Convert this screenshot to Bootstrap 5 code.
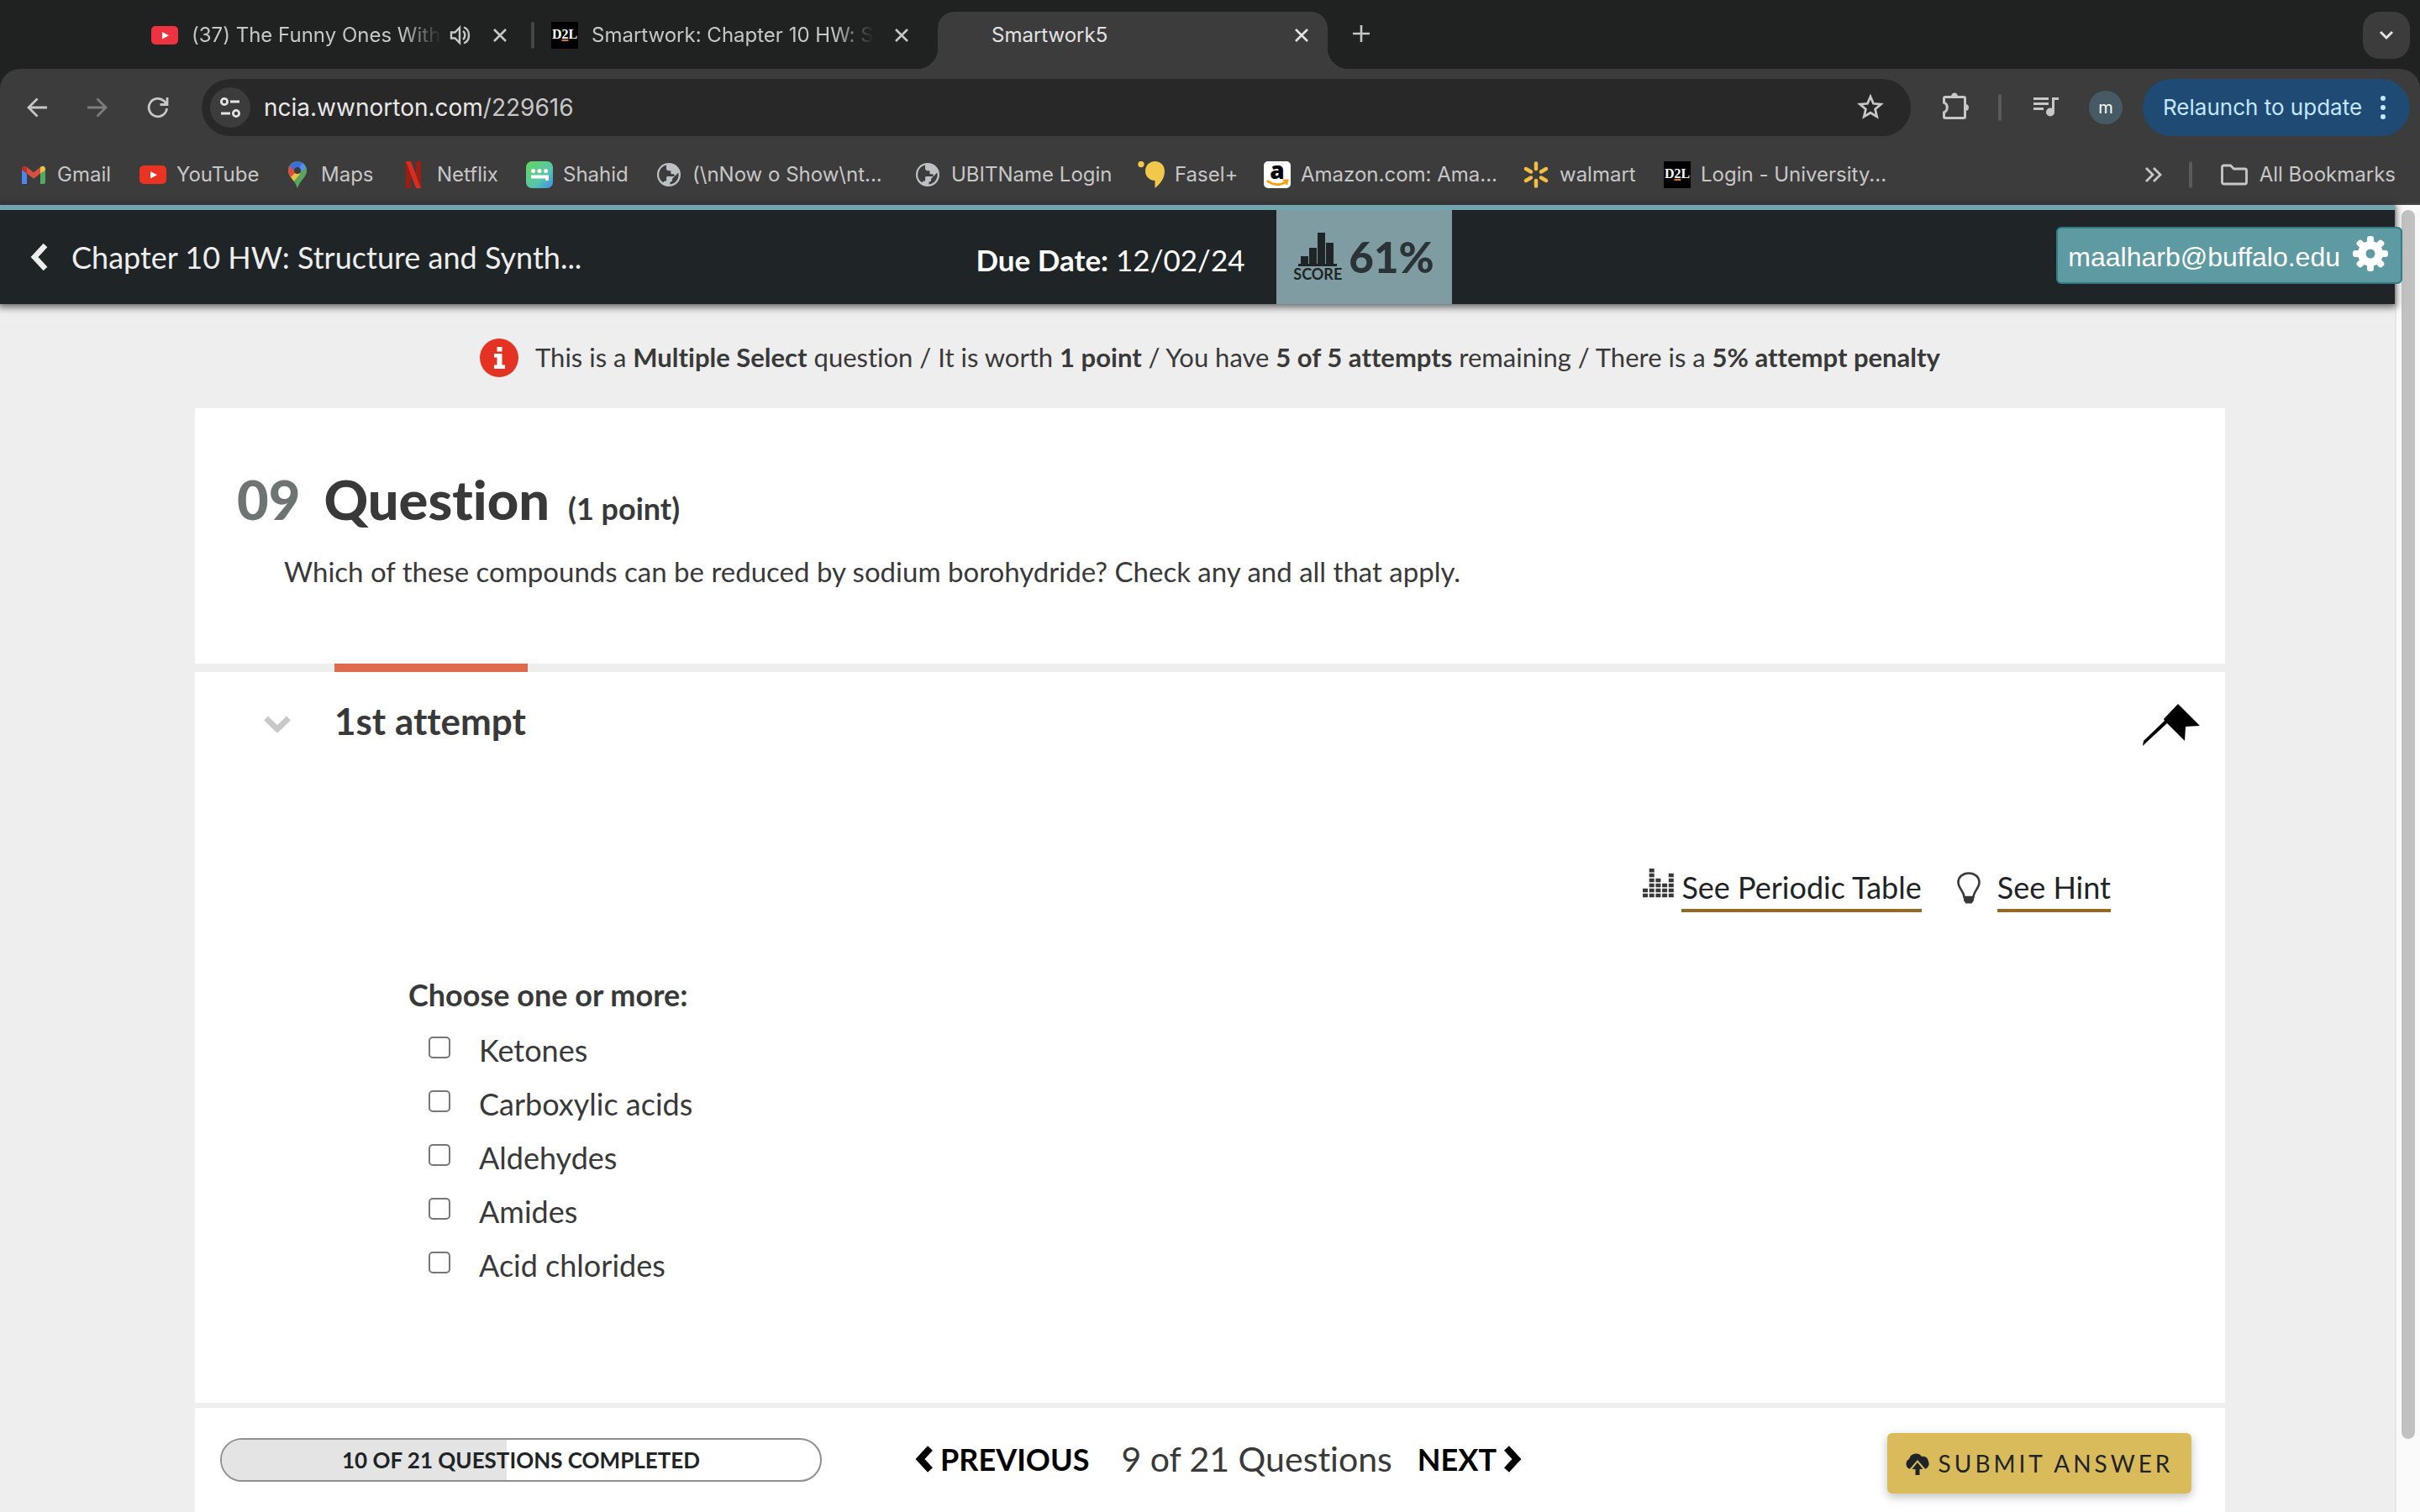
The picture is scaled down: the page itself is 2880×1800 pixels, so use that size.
<!DOCTYPE html>
<html lang="en">
<head>
<meta charset="utf-8">
<meta name="viewport" content="width=device-width, initial-scale=1">
<title>Smartwork5</title>
<link href="https://cdn.jsdelivr.net/npm/bootstrap@5.3.0/dist/css/bootstrap.min.css" rel="stylesheet">
<style>
  body { font-family: Lato, "Liberation Sans", sans-serif; font-variant-ligatures: none; color: #393939; background: #eee; overflow: hidden; }
  svg { display: block; flex: none; }
  button { font: inherit; color: inherit; background: none; border: 0; padding: 0; }
  a { color: inherit; text-decoration: none; }

  /* browser frame */
  .browser { font-family: Inter, Roboto, sans-serif; font-size: 24px; line-height: 32px; color: #c7c7c7; background: #202221; }
  .tabstrip { height: 82px; padding: 14px 12px 0 180px; }
  .tab-item { height: 56px; }
  .tab-title { overflow: hidden; white-space: nowrap; -webkit-mask-image: linear-gradient(to left, transparent, #000 48px); mask-image: linear-gradient(to left, transparent, #000 48px); }
  .tab-one { width: 456px; }
  .tab-two { width: 426px; margin-left: 20px; }
  .tab-active { position: relative; width: 464px; height: 68px; padding: 0 22px 12px 64px; margin-left: 34px; background: #3c3c3c; border-radius: 20px 20px 0 0; color: #e3e3e3; }
  .tab-active::before, .tab-active::after { content: ""; position: absolute; bottom: 0; width: 24px; height: 24px; }
  .tab-active::before { right: 100%; background: radial-gradient(circle at 0 0, transparent 24px, #3c3c3c 24px); }
  .tab-active::after { left: 100%; background: radial-gradient(circle at 100% 0, transparent 24px, #3c3c3c 24px); }
  .vline { width: 4px; height: 32px; border-radius: 2px; background: #5a5a5a; flex: none; }
  .tab-line { margin-left: 28px; background: #454545; }
  .tab-list { width: 56px; height: 56px; border-radius: 20px; background: #3c3c3c; color: #e3e3e3; }
  .d2l { width: 32px; height: 32px; background: #000; color: #fff; font: 700 16px/30px "Liberation Serif", serif; text-align: center; flex: none; display: flex; justify-content: center; }
  .d2l u { text-decoration-color: #e87511; text-decoration-thickness: 2px; }

  .toolbar { background: #3c3c3c; border-radius: 24px 24px 0 0; padding: 12px 12px 0 28px; }
  .nav-gap { margin-left: 40px; }
  .nav-off { color: #7c7c7c; }
  .omnibox { height: 68px; border-radius: 34px; background: #282828; margin-left: 36px; padding: 0 29px 0 10px; }
  .site-info { width: 48px; height: 48px; border-radius: 50%; background: #3c3c3c; color: #e3e3e3; flex: none; }
  .address { font-size: 28px; color: #c7c7c7; margin-left: 16px; }
  .address span { color: #e8e8e8; }
  .tool-line { margin: 0 36px 0 32px; }
  .avatar { width: 40px; height: 40px; border-radius: 50%; background: #455a64; color: #fff; font-size: 20px; margin: 0 24px 0 34px; }
  .relaunch { height: 68px; width: 318px; padding: 0 24px; border-radius: 34px; background: #1f4a74; color: #c2e7ff; font-size: 26px; white-space: nowrap; }

  .bookmarks { background: #3c3c3c; border-bottom: 2px solid #474747; height: 82px; padding: 12px 29px 0 24px; }
  .bookmark-list { display: grid; grid-template-columns: 142px 172px 138px 150px 154px 308px 266px 150px 308px 168px auto; }
  .bookmark-list a, .all-marks { display: flex; align-items: center; gap: 12px; white-space: nowrap; }
  .mark-line { margin: 0 32px 0 30px; }

  /* page */
  .viewport-area { flex: 1 1 0; min-height: 0; }
  .scroll-track { width: 30px; background: #fafafa; border-left: 2px solid #e6e6e6; padding: 6px 6px 0; }
  .scroll-thumb { height: 1463px; width: 16px; border-radius: 8px; background: #c1c1c1; }
  .sw-header { height: 118px; border-top: 6px solid #72a5b0; background: #1f2426; color: #fff; font-size: 36px; line-height: 44px; box-shadow: 0 2px 8px 2px rgba(0,0,0,.55); position: relative; z-index: 2; }
  .side { flex: 1 1 0; }
  .back-link { padding-left: 35px; gap: 28px; color: #eee; }
  .due-date { font-size: 35px; padding-top: 5px; }
  .score-box { width: 209px; background: #7e9ca1; color: #2a3336; margin-left: 37px; }
  .score-word { font-size: 18px; line-height: 18px; color: #1f2426; font-weight: 700; }
  .score-value { font-size: 51px; font-weight: 900; }
  .user-btn { height: 68px; margin: 20px -9px 0 0; padding: 0 14px 0 12px; gap: 14px; background: #5d9aa2; border: 2px solid #347a82; border-radius: 6px; color: #fff; font: 32px/40px "Liberation Sans", Arial, sans-serif; }
  .user-btn span { padding-top: 4px; }
  .content { padding: 0 202px 0 232px; }
  .info-row { height: 124px; padding-top: 3px; font-size: 31px; gap: 20px; }
  .panel { background: #fff; }
  .question-panel { height: 304px; padding: 64px 50px 0; margin-bottom: 10px; }
  .q-number { font-size: 65px; line-height: 88px; color: #6e7373; font-weight: 900; }
  .q-title { font-size: 65px; line-height: 88px; font-weight: 900; margin: 0 0 0 28px; }
  .q-points { font-size: 36px; font-weight: 700; margin-left: 22px; }
  .q-text { font-size: 33px; line-height: 44px; padding-left: 56px; margin: 20px 0 0; }
  .attempt-panel { margin-bottom: 6px; padding-bottom: 40px; }
  .attempt-head { padding: 0 30px 0 82px; }
  .attempt-head .fold-btn { padding-top: 52px; }
  .attempt-head .pin-btn { padding-top: 38px; }
  .attempt-title { position: relative; margin: 0 0 0 52px; padding: 32px 0 0; font-size: 44px; line-height: 52px; font-weight: 700; width: 230px; white-space: nowrap; }
  .attempt-title::before { content: ""; position: absolute; left: 0; right: 0; top: -10px; height: 10px; background: #dd6b4d; }
  .tools { padding: 146px 136px 0 0; font-size: 36px; line-height: 44px; color: #1f2426; }
  .tools a { border-bottom: 4px solid #916b26; padding-bottom: 4px; }
  .bulb { margin: 4px 20px 0 42px; }
  .choices { border: 0; padding: 0 0 0 254px; margin: 76px 0 0; font-size: 36px; }
  .choices legend { font-size: 36px; line-height: 44px; font-weight: 700; margin: 0 0 13px; float: none; }
  .choice { height: 64px; padding-left: 24px; gap: 34px; }
  .choice label { line-height: 44px; padding-bottom: 2px; }
  .choice input { appearance: none; width: 26px; height: 26px; border: 2px solid #767676; border-radius: 5px; background: #fff; margin: 0 0 8px; }
  .sw-footer { height: 124px; padding: 0 40px 0 30px; }
  .done-bar { width: 716px; height: 52px; border: 2px solid #8f8f8f; border-radius: 26px; background: #fff; position: relative; }
  .done-bar .progress-bar { background: #e4e4e4; }
  .done-text { position: absolute; inset: 0; font-size: 26px; line-height: 48px; font-weight: 700; color: #1f2426; text-align: center; }
  .pager { font-size: 36px; line-height: 48px; color: #000; font-weight: 700; margin-left: 111px; padding-bottom: 3px; }
  .pager .count { font-size: 41px; font-weight: 400; color: #393939; margin: 0 30px 0 38px; }
  .pager button { display: flex; align-items: center; gap: 8px; }
  .submit-btn { width: 362px; height: 72px; margin-top: 8px; border-radius: 6px; background: #d9bb5c; color: #1f2426; font-size: 28px; letter-spacing: 4px; gap: 11px; box-shadow: 0 4px 12px rgba(0,0,0,.25); white-space: nowrap; }
</style>
</head>
<body class="d-flex flex-column vh-100">

<svg width="0" height="0" class="position-absolute" aria-hidden="true">
  <symbol id="i-x" viewBox="0 0 18 18"><path d="M2 2l14 14M16 2L2 16" stroke="currentColor" stroke-width="2.6" fill="none"/></symbol>
  <symbol id="i-yt" viewBox="0 0 32 32"><rect y="5" width="32" height="22" rx="5" fill="currentColor"/><path d="M13 12v8.500l8-4.250z" fill="#fff"/></symbol>
  <symbol id="i-globe" viewBox="0 0 32 32"><circle cx="16" cy="16" r="14" fill="#bdc1c6"/><path d="M19 4.600v3.900c0 1.500-1.200 2.700-2.700 2.700h-2.700v2.700c0 .8-.6 1.400-1.400 1.400H9.500V18h8c.8 0 1.400.6 1.400 1.400v4h1.300c1.200 0 2.200.8 2.600 1.900A11.500 11.500 0 0 0 19 4.600zM14.600 27.500v-2.700a2.700 2.700 0 0 1-2.700-2.700v-1.400L4.700 13.500a11.500 11.500 0 0 0 9.900 14z" fill="#3c3c3c" transform="matrix(-1 0 0 1 32 0)"/></symbol>
</svg>

<header class="browser flex-shrink-0">
  <div class="tabstrip d-flex">
    <div class="tab-item tab-one d-flex align-items-center">
      <svg width="32" height="32" color="#ee3340"><use href="#i-yt"/></svg>
      <span class="tab-title flex-grow-1 ms-3">(37) The Funny Ones With</span>
      <button class="ms-2" aria-label="Mute tab"><svg width="28" height="28" viewBox="0 0 28 28" fill="none" stroke="currentColor" stroke-width="2.400"><path d="M3 10.500h4.500L13 5v18l-5.500-5.500H3zM17 9c3 2 3 8 0 10M18 4.500c8 3 8 16 0 19"/></svg></button>
      <button class="ms-4" aria-label="Close tab"><svg width="18" height="18"><use href="#i-x"/></svg></button>
      <span class="vline tab-line"></span>
    </div>
    <div class="tab-item tab-two d-flex align-items-center">
      <span class="d2l">D<u>2</u>L</span>
      <span class="tab-title flex-grow-1 ms-3">Smartwork: Chapter 10 HW: S</span>
      <button class="ms-4" aria-label="Close tab"><svg width="18" height="18"><use href="#i-x"/></svg></button>
    </div>
    <div class="tab-active d-flex align-items-center">
      <span class="flex-grow-1">Smartwork5</span>
      <button aria-label="Close tab"><svg width="18" height="18"><use href="#i-x"/></svg></button>
    </div>
    <button class="ms-4 ps-1 pb-3" aria-label="New tab"><svg width="24" height="24" viewBox="0 0 24 24"><path d="M12 2v20M2 12h20" stroke="currentColor" stroke-width="2.600"/></svg></button>
    <button class="tab-list ms-auto d-flex align-items-center justify-content-center" aria-label="Search tabs"><svg width="18" height="12" viewBox="0 0 18 12"><path d="M2 2l7 7 7-7" stroke="currentColor" stroke-width="3" fill="none"/></svg></button>
  </div>

  <div class="toolbar d-flex align-items-center">
    <button aria-label="Back"><svg width="32" height="32" viewBox="0 0 32 32" fill="none" stroke="currentColor" stroke-width="2.800"><path d="M28 16H6M16.500 5.500L6 16l10.500 10.500"/></svg></button>
    <button class="nav-gap nav-off" aria-label="Forward"><svg width="32" height="32" viewBox="0 0 32 32" fill="none" stroke="currentColor" stroke-width="2.800"><path d="M4 16h22M15.500 5.500L26 16 15.500 26.500"/></svg></button>
    <button class="nav-gap" aria-label="Reload"><svg width="32" height="32" viewBox="0 0 32 32" fill="none" stroke="currentColor" stroke-width="2.800"><path d="M26.500 17a10.700 10.700 0 1 1-3.300-8.700L27 12M27 4v8.500h-8.500"/></svg></button>
    <div class="omnibox d-flex align-items-center flex-grow-1">
      <button class="site-info d-flex align-items-center justify-content-center" aria-label="Site information"><svg width="26" height="26" viewBox="0 0 26 26" fill="none" stroke="currentColor" stroke-width="2.800"><circle cx="6" cy="6" r="3.600"/><path d="M13 6h11M2 20h11"/><circle cx="20" cy="20" r="3.600"/></svg></button>
      <div class="address flex-grow-1"><span>ncia.wwnorton.com</span>/229616</div>
      <button aria-label="Bookmark this page"><svg width="38" height="38" viewBox="0 0 38 38" fill="none" stroke="currentColor" stroke-width="2.800"><path d="M19 6l3.500 8.300 9 .8-6.900 5.900 2.100 8.900-7.700-4.700-7.700 4.700 2.100-8.900-6.900-5.900 9-.8z"/></svg></button>
    </div>
    <button class="ms-4 ps-2" aria-label="Extensions"><svg class="ms-1" width="36" height="36" viewBox="0 0 36 36"><path d="M5 5.500h22a1.500 1.500 0 0 1 1.500 1.500v22a1.500 1.500 0 0 1-1.500 1.500H5A1.500 1.500 0 0 1 3.500 29v-5.200c5-2 5-9.600 0-11.600V7A1.500 1.500 0 0 1 5 5.500z" fill="none" stroke="currentColor" stroke-width="3"/><path d="M12 5a4 4.500 0 0 1 8 0zM29 14a4 4 0 0 1 0 8z" fill="currentColor"/></svg></button>
    <span class="vline tool-line"></span>
    <button aria-label="Media controls"><svg width="34" height="34" viewBox="0 0 34 34" fill="none" stroke="currentColor" stroke-width="3"><path d="M2 6.500h18M2 12.500h18M2 18.500h12M25.500 23V6.500H32"/><circle cx="22" cy="22.500" r="5" fill="currentColor" stroke="none"/></svg></button>
    <button class="avatar d-flex align-items-center justify-content-center" aria-label="Profile">m</button>
    <button class="relaunch d-flex align-items-center justify-content-between">Relaunch to update<svg width="16" height="32" viewBox="0 0 16 32" fill="currentColor"><circle cx="8" cy="5" r="3"/><circle cx="8" cy="16" r="3"/><circle cx="8" cy="27" r="3"/></svg></button>
  </div>

  <div class="bookmarks d-flex align-items-center">
    <nav class="bookmark-list" aria-label="Bookmarks">
      <a href="#"><svg width="32" height="32" viewBox="0 0 32 32"><path d="M2 27V10l6 4.500V27z" fill="#4f86ee"/><path d="M24 27V14.500L30 10v15a2 2 0 0 1-2 2z" fill="#55a95b"/><path d="M24 14.500V7c3-2.500 6-1 6 2.500v1z" fill="#f5c143"/><path d="M8 14.500V7l8 6.300L24 7v7.500l-8 6.300z" fill="#d9503f"/><path d="M2 10.500v-1C2 6 5 4.500 8 7v7.500z" fill="#b7342a"/></svg>Gmail</a>
      <a href="#"><svg width="32" height="32" color="#ea3323"><use href="#i-yt"/></svg>YouTube</a>
      <a href="#"><svg width="32" height="32" viewBox="0 0 32 32"><defs><clipPath id="pin"><path d="M16 0C9.500 0 5 5 5 11c0 8 7.500 10 11 21 3.500-11 11-13 11-21 0-6-4.500-11-11-11z"/></clipPath></defs><g clip-path="url(#pin)"><path d="M0 0h32v32H0z" fill="#58a55c"/><path d="M3 17l9-9 4 3 4 3-11 13z" fill="#f2bf42"/><path d="M4 4h4l8 7-8 8-6-4z" fill="#d9503f"/><path d="M6 5L16 -1l8 4-8 8-2 2z" fill="#3d6fd8"/><path d="M22 2l6 8-1 2-11-1z" fill="#5491f5"/><path d="M25 8l3 3v4L16 32l-3-7z" fill="#58a55c"/></g><circle cx="16" cy="11" r="4" fill="#3c3c3c"/></svg>Maps</a>
      <a href="#"><svg width="32" height="32" viewBox="0 0 32 32"><path d="M7 0h6v32H7zM19 0h6v32h-6z" fill="#9d1c14"/><path d="M7 0h6l12 32h-6z" fill="#d92b20"/></svg>Netflix</a>
      <a href="#"><svg width="32" height="32" viewBox="0 0 32 32"><defs><linearGradient id="sh" x1="0" y1="0" x2="1" y2="1"><stop offset=".1" stop-color="#62d36b"/><stop offset=".6" stop-color="#58c6a8"/><stop offset="1" stop-color="#3f8ff0"/></linearGradient></defs><rect width="32" height="32" rx="7" fill="url(#sh)"/><g fill="#fff"><circle cx="8.500" cy="11.500" r="2.500"/><circle cx="16" cy="11.500" r="2.500"/><circle cx="23.500" cy="11.500" r="2.500"/><path d="M6 16.500h21V23h-4v-2.500H6z"/></g></svg>Shahid</a>
      <a href="#"><svg width="32" height="32"><use href="#i-globe"/></svg>(\nNow o Show\nt...</a>
      <a href="#"><svg width="32" height="32"><use href="#i-globe"/></svg>UBITName Login</a>
      <a href="#"><svg width="32" height="32" viewBox="0 0 32 32" fill="#f2c84b"><circle cx="4" cy="3.500" r="3.700"/><path d="M20.500 0C27 0 32 5 32 11.500c0 9-5 15-11.500 20.500V23C13.500 22.500 9 18 9 11.500S14 0 20.500 0z"/></svg>Fasel+</a>
      <a href="#"><svg class="overflow-visible" width="32" height="32" viewBox="0 0 32 32"><rect width="32" height="32" rx="5" fill="#fff"/><text x="16" y="21" text-anchor="middle" font-family="Open Sans, sans-serif" font-weight="800" font-size="28" fill="#000">a</text><path d="M4 23c7 6 17 6 23 1" fill="none" stroke="#f90" stroke-width="2.600"/><path d="M22.500 22.500h6l-1.500 5.500" fill="none" stroke="#f90" stroke-width="2"/></svg>Amazon.com: Ama...</a>
      <a href="#"><svg width="32" height="32" viewBox="0 0 32 32"><g stroke="#f5bd45" stroke-width="4.500" stroke-linecap="round"><path d="M16 2.500v6.500M16 23v6.500M4 9l6 3.500M22 19.500L28 23M4 23l6-3.500M22 12.500L28 9"/></g></svg>walmart</a>
      <a href="#"><span class="d2l">D<u>2</u>L</span>Login - University...</a>
    </nav>
    <button class="ms-auto" aria-label="More bookmarks"><svg width="24" height="20" viewBox="0 0 24 20" fill="none" stroke="currentColor" stroke-width="2.800"><path d="M3 2l8 8-8 8M12 2l8 8-8 8"/></svg></button>
    <span class="vline mark-line"></span>
    <a href="#" class="all-marks"><svg width="36" height="32" viewBox="0 0 36 32"><path d="M3.500 25V7a2 2 0 0 1 2-2h8l4 4h13a2 2 0 0 1 2 2v14a2 2 0 0 1-2 2h-25a2 2 0 0 1-2-2z" fill="none" stroke="currentColor" stroke-width="2.800"/></svg>All Bookmarks</a>
  </div>
</header>

<div class="viewport-area d-flex">
  <div class="flex-grow-1 d-flex flex-column">
    <div class="sw-header d-flex flex-shrink-0">
      <a href="#" class="side back-link d-flex align-items-center"><svg width="22" height="32" viewBox="0 0 22 32"><path d="M19 2L6 16l13 14" fill="none" stroke="currentColor" stroke-width="6.500"/></svg>Chapter 10 HW: Structure and Synth...</a>
      <div class="d-flex ms-1">
        <div class="due-date align-self-center"><b>Due Date:</b> 12/02/24</div>
        <div class="score-box d-flex align-items-center justify-content-center">
          <div class="d-flex flex-column align-items-center me-2">
            <svg width="46" height="40" viewBox="0 0 46 40" fill="#1f2426"><path d="M0 37h46v3H0zM3 28h9v9H3zM13 18h9v19h-9zM23 0h9v37h-9zM33 12h9v25h-9z"/></svg>
            <span class="score-word">SCORE</span>
          </div>
          <span class="score-value">61%</span>
        </div>
      </div>
      <div class="side d-flex justify-content-end align-items-start">
        <button class="user-btn d-flex align-items-center"><span>maalharb@buffalo.edu</span><svg class="mb-1" width="44" height="44" viewBox="0 0 44 44"><g fill="#fff"><circle cx="22" cy="22" r="15"/><rect x="18" y="1" width="8" height="42" rx="3"/><rect x="18" y="1" width="8" height="42" rx="3" transform="rotate(45 22 22)"/><rect x="18" y="1" width="8" height="42" rx="3" transform="rotate(90 22 22)"/><rect x="18" y="1" width="8" height="42" rx="3" transform="rotate(135 22 22)"/></g><circle cx="22" cy="22" r="5.500" fill="#5d9aa2"/></svg></button>
      </div>
    </div>

    <main class="content d-flex flex-column flex-grow-1">
      <div class="info-row d-flex align-items-center justify-content-center">
        <svg width="46" height="46" viewBox="0 0 46 46"><circle cx="23" cy="23" r="23" fill="#e53323"/><path d="M20.500 10h6v5.500h-6zM17 18h9.500v13.500H30V36H17v-4.500h3.500v-9H17z" fill="#fff"/></svg>
        <div>This is a <b>Multiple Select</b> question / It is worth <b>1 point</b> / You have <b>5 of 5 attempts</b> remaining / There is a <b>5% attempt penalty</b></div>
      </div>

      <section class="panel question-panel">
        <div class="d-flex align-items-baseline">
          <span class="q-number">09</span>
          <h1 class="q-title">Question</h1>
          <span class="q-points">(1 point)</span>
        </div>
        <p class="q-text">Which of these compounds can be reduced by sodium borohydride? Check any and all that apply.</p>
      </section>

      <section class="panel attempt-panel flex-grow-1">
        <div class="attempt-head d-flex align-items-start">
          <button class="fold-btn" aria-label="Collapse attempt"><svg width="32" height="20" viewBox="0 0 32 20"><path d="M2.500 3L16 16 29.500 3" fill="none" stroke="#c8c8c8" stroke-width="7"/></svg></button>
          <h2 class="attempt-title">1st attempt</h2>
          <button class="pin-btn ms-auto" aria-label="Pin question"><svg width="68" height="50" viewBox="0 0 68 50"><path d="M42 0l26 26-17 1-1 17-21-21-26 24-3 3 1-6 25-24-1-2z"/></svg></button>
        </div>

        <div class="tools d-flex justify-content-end align-items-start">
          <svg class="me-2" width="38" height="36" viewBox="0 0 38 36" fill="none" stroke="#393939" stroke-width="4.500"><path d="M0 32h6M7.700 32h6M15.400 32h6M23.100 32h6M30.800 32h6M0 26h6M7.700 26h6M15.400 26h6M23.100 26h6M30.800 26h6M7.700 20h6M15.400 20h6M23.100 20h6M30.800 20h6M7.700 14h6M15.400 14h6M30.800 14h6M7.700 8h6M30.800 8h6M7.700 2.250h6"/></svg>
          <a href="#">See Periodic Table</a>
          <svg class="bulb" width="28" height="38" viewBox="0 0 28 38"><path d="M8.500 30C8 23 1.500 19 1.500 12.500 1.500 6 7 1.500 14 1.500S26.500 6 26.500 12.500C26.500 19 20 23 19.500 30z" fill="none" stroke="#393939" stroke-width="2.600"/><path d="M8 29.500h12V34l-2.500 3.500h-7L8 34z" fill="#393939"/></svg>
          <a href="#">See Hint</a>
        </div>

        <fieldset class="choices">
          <legend>Choose one or more:</legend>
          <div class="choice d-flex align-items-center"><input type="checkbox" id="c1"><label for="c1">Ketones</label></div>
          <div class="choice d-flex align-items-center"><input type="checkbox" id="c2"><label for="c2">Carboxylic acids</label></div>
          <div class="choice d-flex align-items-center"><input type="checkbox" id="c3"><label for="c3">Aldehydes</label></div>
          <div class="choice d-flex align-items-center"><input type="checkbox" id="c4"><label for="c4">Amides</label></div>
          <div class="choice d-flex align-items-center"><input type="checkbox" id="c5"><label for="c5">Acid chlorides</label></div>
        </fieldset>
      </section>

      <footer class="panel sw-footer d-flex align-items-center flex-shrink-0">
        <div class="done-bar progress" role="progressbar" aria-label="Questions completed" aria-valuenow="10" aria-valuemin="0" aria-valuemax="21">
          <div class="progress-bar" style="width:47.6%"></div>
          <span class="done-text">10 OF 21 QUESTIONS COMPLETED</span>
        </div>
        <div class="pager d-flex align-items-center">
          <button><svg width="22" height="32" viewBox="0 0 22 32"><path d="M18 3L6 16l12 13" fill="none" stroke="currentColor" stroke-width="8"/></svg>PREVIOUS</button>
          <span class="count">9 of 21 Questions</span>
          <button>NEXT<svg width="22" height="32" viewBox="0 0 22 32"><path d="M4 3l12 13L4 29" fill="none" stroke="currentColor" stroke-width="8"/></svg></button>
        </div>
        <button class="submit-btn ms-auto d-flex align-items-center justify-content-center"><svg width="28" height="28" viewBox="0 0 28 28"><path d="M5 20.500H4A6.500 6.500 0 0 1 4 9 8.500 8.500 0 0 1 19 6a6.500 6.500 0 0 1 8 6 6.500 6.500 0 0 1-3 8.500h-1L14 10z" fill="currentColor"/><path d="M14 13l6.500 8H16.500v7h-5v-7H7.500z" fill="currentColor"/></svg>SUBMIT ANSWER</button>
      </footer>
    </main>
  </div>
  <div class="scroll-track flex-shrink-0"><div class="scroll-thumb"></div></div>
</div>

<script src="https://cdn.jsdelivr.net/npm/bootstrap@5.3.0/dist/js/bootstrap.bundle.min.js"></script>
</body>
</html>
